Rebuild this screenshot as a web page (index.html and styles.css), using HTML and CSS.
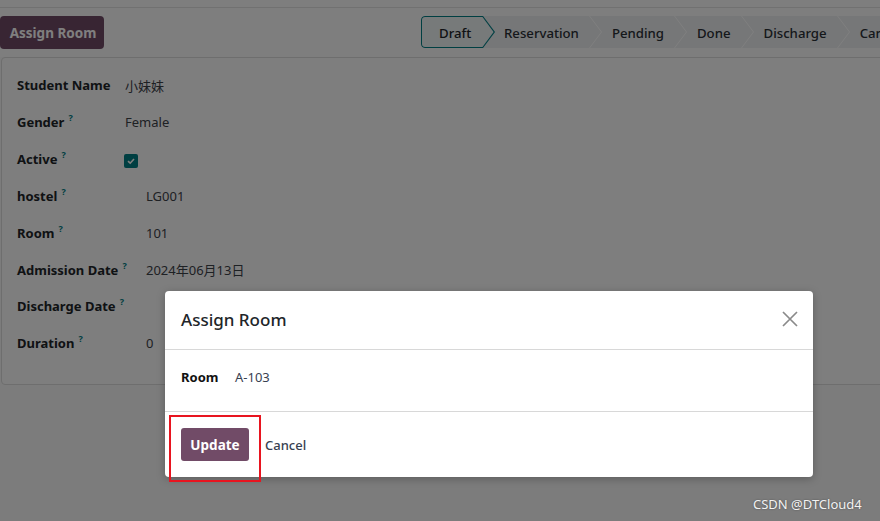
FILE: index.html
```html
<!DOCTYPE html>
<html lang="en">
<head>
<meta charset="utf-8">
<title>Assign Room</title>
<link rel="stylesheet" href="styles.css">
</head>
<body>
<div class="page">
  <div class="topstrip"></div>
  <div class="cp">
    <div class="cp-left">
      <button class="btn-primary btn-main">Assign Room</button>
    </div>
    <div class="statusbar">
      <div class="st-active"><div class="st-active-in">Draft</div></div>
      <span class="st">Reservation</span>
      <svg class="chev" width="13" height="32" viewBox="0 0 13 32"><polyline points="0.5,0 12.5,16 0.5,32" fill="none" stroke="#ffffff" stroke-width="1"/></svg>
      <span class="st">Pending</span>
      <svg class="chev" width="13" height="32" viewBox="0 0 13 32"><polyline points="0.5,0 12.5,16 0.5,32" fill="none" stroke="#ffffff" stroke-width="1"/></svg>
      <span class="st">Done</span>
      <svg class="chev" width="13" height="32" viewBox="0 0 13 32"><polyline points="0.5,0 12.5,16 0.5,32" fill="none" stroke="#ffffff" stroke-width="1"/></svg>
      <span class="st">Discharge</span>
      <svg class="chev" width="13" height="32" viewBox="0 0 13 32"><polyline points="0.5,0 12.5,16 0.5,32" fill="none" stroke="#ffffff" stroke-width="1"/></svg>
      <span class="st">Cancel</span>
    </div>
  </div>
  <div class="sheet">
    <div class="grp g1">
      <div class="lbl">Student Name</div><div class="val">小妹妹</div>
      <div class="lbl">Gender<sup class="q">?</sup></div><div class="val">Female</div>
      <div class="lbl">Active<sup class="q">?</sup></div>
      <div class="val"><span class="chk"><svg width="10" height="10" viewBox="0 0 10 10"><polyline points="2,5.2 4.2,7.2 8,3" fill="none" stroke="#fff" stroke-width="1.6"/></svg></span></div>
    </div>
    <div class="grp g2">
      <div class="lbl">hostel<sup class="q">?</sup></div><div class="val">LG001</div>
      <div class="lbl">Room<sup class="q">?</sup></div><div class="val">101</div>
      <div class="lbl">Admission Date<sup class="q">?</sup></div><div class="val">2024年06月13日</div>
      <div class="lbl">Discharge Date<sup class="q">?</sup></div><div class="val"></div>
      <div class="lbl">Duration<sup class="q">?</sup></div><div class="val">0</div>
    </div>
  </div>
</div>

<div class="backdrop"></div>

<div class="modal">
  <div class="m-head">
    <h4 class="m-title">Assign Room</h4>
    <svg class="m-close" width="16" height="16" viewBox="0 0 16 16"><path d="M1 1 L15 15 M15 1 L1 15" stroke="#8a8a8a" stroke-width="1.7" fill="none"/></svg>
  </div>
  <div class="m-body">
    <span class="m-lbl">Room</span><span class="m-val">A-103</span>
  </div>
  <div class="m-foot">
    <button class="btn-primary btn-upd">Update</button>
    <span class="btn-link">Cancel</span>
  </div>
</div>

<div class="annot"></div>
<div class="wm">CSDN @DTCloud4</div>
</body>
</html>
```

FILE: styles.css
```css
* { box-sizing: border-box; }
html, body { margin: 0; padding: 0; }
body {
  width: 880px;
  height: 521px;
  overflow: hidden;
  background: #f9f9f9;
  font-family: "Noto Sans", "Noto Sans CJK SC", sans-serif;
  font-size: 13px;
  color: #212529;
  position: relative;
}
.page { width: 880px; }
.topstrip {
  height: 8px;
  background: #fdfdfd;
  border-bottom: 1px solid #e2e2e2;
}
.cp {
  display: grid;
  grid-template-columns: 421px 1fr;
  height: 49px;
  padding-top: 8px;
  background: #fdfdfd;
  overflow: hidden;
}
.cp-left { display: flex; align-items: flex-start; }
.btn-primary {
  border: 0;
  background: #714b67;
  color: #fff;
  font-family: inherit;
  font-weight: 700;
  font-size: 13.5px;
  border-radius: 4px;
  cursor: pointer;
}
.btn-main { width: 104px; height: 33px; padding: 0 0 0 2px; }
.statusbar {
  display: flex;
  align-items: center;
  height: 32px;
  background: #eceef0;
  border-radius: 4px 0 0 4px;
  white-space: nowrap;
  overflow: hidden;
}
.st-active {
  width: 74px;
  height: 32px;
  flex: none;
  background: #017e84;
  border-radius: 4px 0 0 4px;
  clip-path: polygon(0 0, 62px 0, 74px 50%, 62px 100%, 0 100%);
  padding: 1px;
}
.st-active-in {
  height: 30px;
  background: #eef4f5;
  border-radius: 3px 0 0 3px;
  clip-path: polygon(0 0, 60.5px 0, 71.6px 50%, 60.5px 100%, 0 100%);
  padding-left: 17px;
  line-height: 32px;
  font-weight: 500;
  font-size: 13.2px;
  color: #212529;
}
.st {
  padding: 0 10px;
  font-weight: 500;
  font-size: 13.2px;
  color: #2b3036;
  line-height: 34px;
  height: 32px;
}
.statusbar .st:first-of-type { padding-left: 9px; }
.chev { flex: none; display: block; }

.sheet {
  margin-left: 1px;
  width: 900px;
  height: 328px;
  background: #fcfcfc;
  border: 1px solid #dcdcdc;
  border-radius: 4px;
  padding: 9px 0 0 15px;
}
.grp {
  display: grid;
  grid-auto-rows: 36.85px;
  align-items: center;
}
.g1 { grid-template-columns: 108px 1fr; }
.g2 { grid-template-columns: 129px 1fr; }
.lbl {
  font-weight: 700;
  color: #212529;
  white-space: nowrap;
}
.val { color: #3c4249; }
.q {
  color: #017e84;
  font-size: 9px;
  font-weight: 700;
  margin-left: 4px;
  vertical-align: 6px;
  line-height: 0;
}
.chk {
  display: inline-flex;
  align-items: center;
  justify-content: center;
  width: 14px;
  height: 14px;
  background: #017e84;
  border-radius: 2px;
  margin-left: -1px;
  vertical-align: middle;
}

.backdrop {
  position: absolute;
  inset: 0;
  background: rgba(0, 0, 0, 0.5);
}
.modal {
  position: absolute;
  left: 165px;
  top: 291px;
  width: 648px;
  height: 186px;
  background: #fff;
  border-radius: 4px;
  box-shadow: 0 2px 8px rgba(0,0,0,0.25);
  display: flex;
  flex-direction: column;
}
.m-head {
  height: 59px;
  flex: none;
  display: flex;
  align-items: center;
  justify-content: space-between;
  padding: 0 15px 2px 16px;
  border-bottom: 1px solid #d8d8d8;
}
.m-title {
  margin: 0;
  font-size: 17px;
  font-weight: 500;
  color: #212529;
}
.m-close { display: block; }
.m-body {
  height: 62px;
  flex: none;
  display: flex;
  align-items: flex-start;
  padding: 17px 16px 0;
  line-height: 20px;
  border-bottom: 1px solid #d8d8d8;
}
.m-lbl { width: 54px; font-weight: 700; color: #111; }
.m-val { color: #374151; }
.m-foot {
  flex: 1;
  display: flex;
  align-items: center;
  padding: 0 16px;
  gap: 16px;
}
.btn-upd { width: 68px; height: 33px; padding: 0; border-radius: 3px; }
.btn-link { color: #374151; font-weight: 500; }

.annot {
  position: absolute;
  left: 169px;
  top: 415px;
  width: 92px;
  height: 67px;
  border: 2px solid #e8141f;
}
.wm {
  position: absolute;
  left: 753px;
  top: 495px;
  font-family: "Noto Sans", sans-serif;
  font-size: 13px;
  color: #f2f2f2;
  text-shadow: 0 0 2px rgba(0,0,0,0.4);
}
```
